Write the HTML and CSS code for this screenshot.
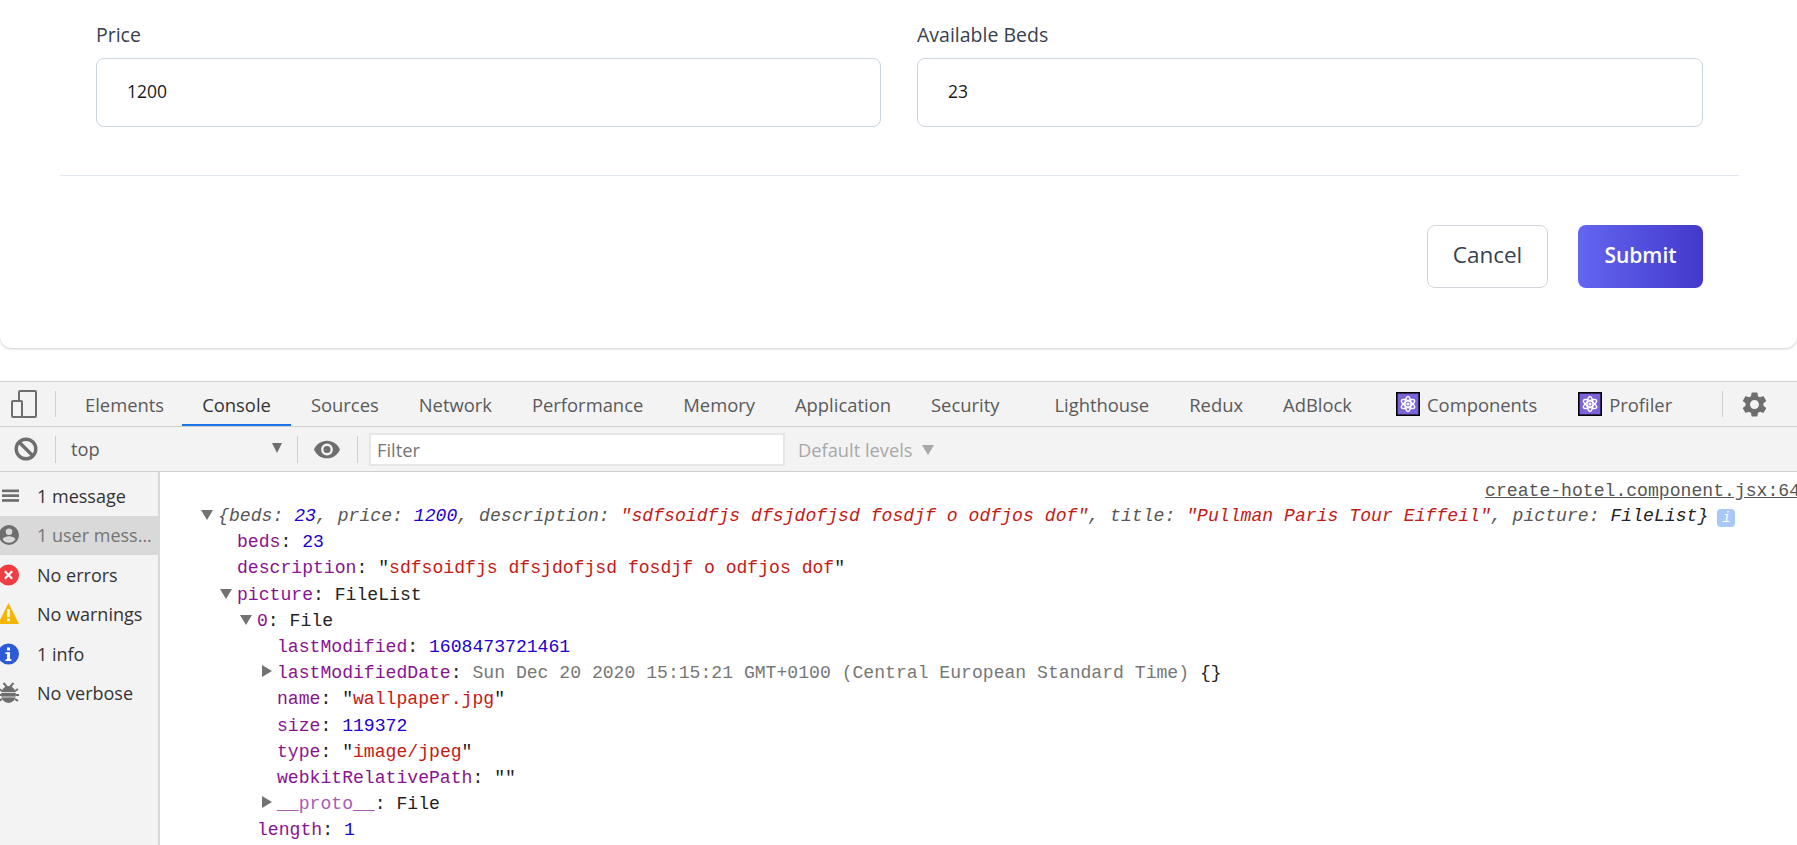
FILE: index.html
```html
<!DOCTYPE html>
<html lang="en">
<head>
    <title>Create hotel</title>
    <link rel="stylesheet" href="styles.css">
</head>
<body>
<section class="card">
    <div class="fields">
        <div class="field">
            <label class="field-label" for="price">Price</label>
            <input class="field-input" id="price" value="1200">
        </div>
        <div class="field">
            <label class="field-label" for="beds">Available Beds</label>
            <input class="field-input" id="beds" value="23">
        </div>
    </div>
    <hr class="divider">
    <div class="actions">
        <button class="btn btn-cancel">Cancel</button>
        <button class="btn btn-submit">Submit</button>
    </div>
</section>

<section class="devtools">
    <nav class="tabbar">
        <svg class="device-icon" viewBox="0 0 26 28" fill="none" stroke="#6e6e6e" stroke-width="2">
            <path d="M8 10V2a1 1 0 0 1 1-1h15a1 1 0 0 1 1 1v24a1 1 0 0 1-1 1H11"/>
            <rect x="1" y="11" width="10" height="16" rx="1"/>
        </svg>
        <span class="sep sep-tabs"></span>
        <span class="tab tab-elements">Elements</span>
        <span class="tab tab-active">Console</span>
        <span class="tab">Sources</span>
        <span class="tab">Network</span>
        <span class="tab">Performance</span>
        <span class="tab">Memory</span>
        <span class="tab">Application</span>
        <span class="tab tab-security">Security</span>
        <span class="tab">Lighthouse</span>
        <span class="tab">Redux</span>
        <span class="tab tab-adblock">AdBlock</span>
        <span class="tab tab-react">
            <svg class="react-icon" viewBox="0 0 24 24">
                <rect x="0.8" y="0.8" width="22.4" height="22.4" fill="#7b62d9" stroke="#000" stroke-width="1.6"/>
                <g fill="none" stroke="#fff" stroke-width="1.4">
                    <ellipse cx="12" cy="12" rx="3" ry="7.5"/>
                    <ellipse cx="12" cy="12" rx="3" ry="7.5" transform="rotate(60 12 12)"/>
                    <ellipse cx="12" cy="12" rx="3" ry="7.5" transform="rotate(120 12 12)"/>
                </g>
                <circle cx="12" cy="12" r="1.6" fill="#fff"/>
            </svg>
            Components
        </span>
        <span class="tab tab-react">
            <svg class="react-icon" viewBox="0 0 24 24">
                <rect x="0.8" y="0.8" width="22.4" height="22.4" fill="#7b62d9" stroke="#000" stroke-width="1.6"/>
                <g fill="none" stroke="#fff" stroke-width="1.4">
                    <ellipse cx="12" cy="12" rx="3" ry="7.5"/>
                    <ellipse cx="12" cy="12" rx="3" ry="7.5" transform="rotate(60 12 12)"/>
                    <ellipse cx="12" cy="12" rx="3" ry="7.5" transform="rotate(120 12 12)"/>
                </g>
                <circle cx="12" cy="12" r="1.6" fill="#fff"/>
            </svg>
            Profiler
        </span>
        <span class="tabbar-end">
            <span class="sep sep-tabs"></span>
            <svg class="gear-icon" viewBox="2 2 20 20" fill="#6e6e6e">
                <path d="M19.14 12.94c.04-.3.06-.61.06-.94 0-.32-.02-.64-.07-.94l2.03-1.58c.18-.14.23-.41.12-.61l-1.92-3.32c-.12-.22-.37-.29-.59-.22l-2.39.96c-.5-.38-1.03-.7-1.62-.94l-.36-2.54c-.04-.24-.24-.41-.48-.41h-3.84c-.24 0-.43.17-.47.41l-.36 2.54c-.59.24-1.13.57-1.62.94l-2.39-.96c-.22-.08-.47 0-.59.22L2.74 8.87c-.12.21-.08.47.12.61l2.03 1.58c-.05.3-.09.63-.09.94s.02.64.07.94l-2.03 1.58c-.18.14-.23.41-.12.61l1.92 3.32c.12.22.37.29.59.22l2.39-.96c.5.38 1.03.7 1.62.94l.36 2.54c.05.24.24.41.48.41h3.84c.24 0 .44-.17.47-.41l.36-2.54c.59-.24 1.13-.56 1.62-.94l2.39.96c.22.08.47 0 .59-.22l1.92-3.32c.12-.22.07-.47-.12-.61l-2.01-1.58zM12 15.6c-1.98 0-3.6-1.62-3.6-3.6s1.62-3.6 3.6-3.6 3.6 1.62 3.6 3.6-1.62 3.6-3.6 3.6z"/>
            </svg>
        </span>
    </nav>

    <div class="toolbar">
        <svg class="ban-icon" viewBox="0 0 24 24" fill="none" stroke="#6e6e6e" stroke-width="3.4">
            <circle cx="12" cy="12" r="9.8"/>
            <path d="M5 5l14 14"/>
        </svg>
        <span class="sep sep-ban"></span>
        <span class="context">
            top
            <span class="tri-down"></span>
        </span>
        <span class="sep sep-context"></span>
        <svg class="eye-icon" viewBox="1 4 22 16" fill="#6e6e6e">
            <path d="M12 4.5C7 4.5 2.7 7.6 1 12c1.700 4.400 6 7.500 11 7.500s9.300-3.100 11-7.500c-1.700-4.400-6-7.500-11-7.500zM12 17a5 5 0 1 1 0-10 5 5 0 0 1 0 10zm0-8a3 3 0 1 0 0 6 3 3 0 0 0 0-6z"/>
        </svg>
        <span class="sep sep-eye"></span>
        <div class="filter">Filter</div>
        <span class="levels">Default levels <span class="tri-down tri-levels"></span></span>
    </div>

    <div class="console-area">
        <aside class="sidebar">
            <div class="side-item">
                <svg class="side-icon" viewBox="0 0 20 20" fill="#6e6e6e">
                    <rect x="2" y="3.500" width="17" height="2.700"/>
                    <rect x="2" y="8.300" width="17" height="2.700"/>
                    <rect x="2" y="13.100" width="17" height="2.700"/>
                </svg>
                1 message
            </div>
            <div class="side-item side-selected">
                <svg class="side-icon" viewBox="0 0 20 20" fill="#6e6e6e">
                    <path d="M9 0a10 10 0 1 0 0 20A10 10 0 0 0 9 0zm0 3.500a3.300 3.300 0 1 1 0 6.600 3.300 3.300 0 0 1 0-6.600zm0 14.200c-2.700 0-5-1.300-6.300-3.300 0-2 4.200-3.100 6.300-3.100s6.300 1.100 6.300 3.100c-1.300 2-3.600 3.300-6.300 3.300z"/>
                </svg>
                1 user mess...
            </div>
            <div class="side-item">
                <svg class="side-icon" viewBox="0 0 20 20">
                    <circle cx="8.500" cy="10" r="10.500" fill="#ee3d43"/>
                    <path d="M4.800 6.300l7.400 7.400M12.200 6.300l-7.400 7.400" stroke="#fff" stroke-width="2.200"/>
                </svg>
                No errors
            </div>
            <div class="side-item">
                <svg class="side-icon" viewBox="0 0 20 20">
                    <path d="M8.500 -1L19 20H-2z" fill="#f4b400"/>
                    <rect x="7.200" y="5" width="2.600" height="8" fill="#fff"/>
                    <rect x="7.200" y="14.500" width="2.600" height="2.800" fill="#fff"/>
                </svg>
                No warnings
            </div>
            <div class="side-item">
                <svg class="side-icon" viewBox="0 0 20 20">
                    <circle cx="8.500" cy="10" r="10.500" fill="#2d5bd7"/>
                    <rect x="7" y="3.500" width="3" height="3" fill="#fff"/>
                    <path d="M5.500 8.300h4.500v7h1.500v1.700h-6v-1.700H7v-5.300H5.500z" fill="#fff"/>
                </svg>
                1 info
            </div>
            <div class="side-item">
                <svg class="side-icon" viewBox="0 0 20 20" fill="#6e6e6e">
                    <ellipse cx="8.500" cy="11.500" rx="7.500" ry="8.500"/>
                    <path d="M3.500 0l3.500 4M13.500 0l-3.500 4M-1 6l3 2M18 6l-3 2M-2 12h3M19 12h-3M-1 18l3-2M18 18l-3-2" stroke="#6e6e6e" stroke-width="2"/>
                    <path d="M1 9.500h15M1 14h15" stroke="#f3f3f3" stroke-width="0.800"/>
                </svg>
                No verbose
            </div>
        </aside>

        <main class="console">
            <div class="source"><span class="source-link">create-hotel.component.jsx:64</span></div>
            <div class="row row-root"><span class="tri tri-open"></span><span class="preview">{beds: <span class="num">23</span>, price: <span class="num">1200</span>, description: <span class="str">"sdfsoidfjs dfsjdofjsd fosdjf o odfjos dof"</span>, title: <span class="str">"Pullman Paris Tour Eiffeil"</span>, picture: <span class="plain">FileList</span><span class="plain">}</span></span><span class="info-badge">i</span></div>
            <div class="row depth-1"><span class="key">beds</span>: <span class="num">23</span></div>
            <div class="row depth-1"><span class="key">description</span>: "<span class="str">sdfsoidfjs dfsjdofjsd fosdjf o odfjos dof</span>"</div>
            <div class="row depth-1"><span class="tri tri-open"></span><span class="key">picture</span>: FileList</div>
            <div class="row depth-2"><span class="tri tri-open"></span><span class="key">0</span>: File</div>
            <div class="row depth-3"><span class="key">lastModified</span>: <span class="num">1608473721461</span></div>
            <div class="row depth-3"><span class="tri tri-closed"></span><span class="key">lastModifiedDate</span>: <span class="date">Sun Dec 20 2020 15:15:21 GMT+0100 (Central European Standard Time)</span> {}</div>
            <div class="row depth-3"><span class="key">name</span>: "<span class="str">wallpaper.jpg</span>"</div>
            <div class="row depth-3"><span class="key">size</span>: <span class="num">119372</span></div>
            <div class="row depth-3"><span class="key">type</span>: "<span class="str">image/jpeg</span>"</div>
            <div class="row depth-3"><span class="key">webkitRelativePath</span>: ""</div>
            <div class="row depth-3"><span class="tri tri-closed"></span><span class="key key-proto">__proto__</span>: File</div>
            <div class="row depth-2"><span class="key">length</span>: <span class="num">1</span></div>
        </main>
    </div>
</section>
</body>
</html>
```

FILE: styles.css
```css
:root {
    --dt-bg: #f3f3f3;
    --dt-border: #cfcfcf;
    --dt-text: #5a5a5a;
    --form-text: #374151;
    --key: #881391;
    --num: #1c00cf;
    --str: #c41a16;
}

* {
    margin: 0;
    padding: 0;
    box-sizing: border-box;
}

html, body {
    height: 845px;
    overflow: hidden;
}

body {
    font-family: "Open Sans", "Noto Sans", sans-serif;
    background: #fff;
    color: #222;
}

/* form card */
.card {
    height: 348px;
    padding: 0 58px 0 60px;
    border-radius: 0 0 12px 12px;
    box-shadow: 0 1px 3px rgba(0, 0, 0, 0.2);
}

.fields {
    display: grid;
    grid-template-columns: 785px 786px;
    column-gap: 36px;
    padding: 23px 36px 0;
}

.field-label {
    display: block;
    height: 24px;
    margin-bottom: 11px;
    font-size: 19.500px;
    line-height: 24px;
    color: var(--form-text);
}

.field-input {
    display: block;
    width: 100%;
    height: 69px;
    padding: 0 30px 3px;
    border: 1px solid #cbd5e0;
    border-radius: 8px;
    font-family: inherit;
    font-size: 17.500px;
    color: #1a1a1a;
    outline: none;
}

.divider {
    height: 1px;
    margin-top: 48px;
    border: 0;
    background: #e2e8f0;
}

.actions {
    display: flex;
    justify-content: flex-end;
    gap: 30px;
    margin-top: 49px;
    padding-right: 36px;
}

.btn {
    height: 63px;
    padding-bottom: 4px;
    border-radius: 8px;
    font-family: inherit;
}

.btn-cancel {
    width: 121px;
    border: 1px solid #d1d5db;
    background: #fff;
    color: var(--form-text);
    font-size: 22.500px;
}

.btn-submit {
    width: 125px;
    border: 0;
    background: linear-gradient(90deg, #6366f1, #4338ca);
    color: #fff;
    font-weight: 600;
    font-size: 21px;
}

/* devtools */
.devtools {
    margin-top: 33px;
    height: 464px;
    border-top: 1px solid var(--dt-border);
}

.tabbar {
    display: flex;
    align-items: center;
    height: 45px;
    background: var(--dt-bg);
    border-bottom: 1px solid var(--dt-border);
    padding-left: 11px;
}

.device-icon {
    width: 26px;
    height: 28px;
}

.sep {
    display: block;
    width: 1px;
    background: var(--dt-border);
}

.sep-tabs {
    height: 26px;
}

.tabbar > .sep-tabs {
    margin: 0 9px 0 18px;
}

.tab {
    display: flex;
    align-items: center;
    gap: 7px;
    height: 44px;
    padding: 0 20px;
    font-size: 18.400px;
    color: var(--dt-text);
    white-space: nowrap;
}

.tab-elements {
    padding-right: 18px;
}

.tab-active {
    color: #333;
    box-shadow: inset 0 -2px 0 #1a73e8;
}

.tab-security {
    padding-right: 35px;
}

.tab-adblock {
    padding-right: 23px;
}

.tab-react {
    padding-left: 21px;
}

.react-icon {
    width: 24px;
    height: 24px;
}

.tabbar-end {
    display: flex;
    align-items: center;
    margin-left: auto;
    padding-right: 30px;
    gap: 19px;
}

.gear-icon {
    width: 25px;
    height: 25px;
}

.toolbar {
    display: flex;
    align-items: center;
    height: 45px;
    background: var(--dt-bg);
    border-bottom: 1px solid var(--dt-border);
    padding-left: 14px;
    font-size: 18.300px;
    color: var(--dt-text);
}

.ban-icon {
    width: 24px;
    height: 24px;
}

.sep-ban, .sep-context, .sep-eye {
    height: 27px;
}

.sep-ban {
    margin: 0 15px 0 17px;
}

.context {
    display: flex;
    justify-content: space-between;
    align-items: center;
    width: 211px;
    padding-bottom: 2px;
}

.tri-down {
    display: inline-block;
    border-left: 5.500px solid transparent;
    border-right: 5.500px solid transparent;
    border-top: 10px solid #6e6e6e;
}

.sep-context {
    margin: 0 16px 0 15px;
}

.eye-icon {
    width: 26px;
    height: 19px;
}

.sep-eye {
    margin: 0 11px 0 17px;
}

.filter {
    display: flex;
    align-items: center;
    width: 416px;
    height: 33px;
    padding-left: 6px;
    background: #fff;
    border: 2px solid #e6e6e6;
    color: #757575;
}

.levels {
    margin-left: 13px;
    color: #a8a8a8;
}

.tri-levels {
    margin-left: 5px;
    border-left-width: 6px;
    border-right-width: 6px;
    border-top-color: #a8a8a8;
    vertical-align: 2px;
}

.console-area {
    display: flex;
    height: 373px;
}

.sidebar {
    width: 160px;
    padding-top: 4px;
    background: var(--dt-bg);
    border-right: 2px solid #d8d8d8;
}

.side-item {
    display: flex;
    align-items: center;
    gap: 17px;
    height: 39.500px;
    font-size: 18px;
    color: #333;
    white-space: nowrap;
}

.side-selected {
    background: #d9d9d9;
    color: #757575;
}

.side-icon {
    flex: none;
    width: 20px;
    height: 20px;
    overflow: visible;
}

.console {
    flex: 1;
    min-width: 0;
    font-family: "Liberation Mono", "DejaVu Sans Mono", monospace;
    font-size: 18.100px;
    color: #222;
    white-space: nowrap;
    overflow: hidden;
}

.source {
    height: 31px;
    padding-top: 7px;
    line-height: 24px;
    text-align: right;
    margin-right: -3px;
}

.source-link {
    color: #555;
    text-decoration: underline;
}

.row {
    height: 26.200px;
    line-height: 26.200px;
}

.row-root {
    padding-left: 41px;
}

.depth-1 { padding-left: 77px; }
.depth-2 { padding-left: 97px; }
.depth-3 { padding-left: 117px; }

.tri {
    display: inline-block;
    width: 0;
    height: 0;
    vertical-align: 1px;
}

.tri-open {
    margin-left: -17px;
    margin-right: 5px;
    border-left: 6px solid transparent;
    border-right: 6px solid transparent;
    border-top: 10px solid #727272;
}

.tri-closed {
    margin-left: -15px;
    margin-right: 5px;
    border-top: 6px solid transparent;
    border-bottom: 6px solid transparent;
    border-left: 10px solid #727272;
}

.row-root .tri-open {
    margin-left: 0;
    margin-right: 5px;
}

.preview {
    font-style: italic;
    color: #565656;
    letter-spacing: 0.02px;
}

.plain {
    color: #222;
}

.key { color: var(--key); }
.key-proto { color: #a85db1; }
.num { color: var(--num); }
.str { color: var(--str); }
.date { color: #777; }

.info-badge {
    display: inline-block;
    width: 18px;
    height: 18px;
    margin-left: 9px;
    border-radius: 4px;
    background: #a8c7fa;
    color: #fff;
    font-size: 14px;
    line-height: 18px;
    text-align: center;
    font-style: italic;
    vertical-align: -1px;
}
```
